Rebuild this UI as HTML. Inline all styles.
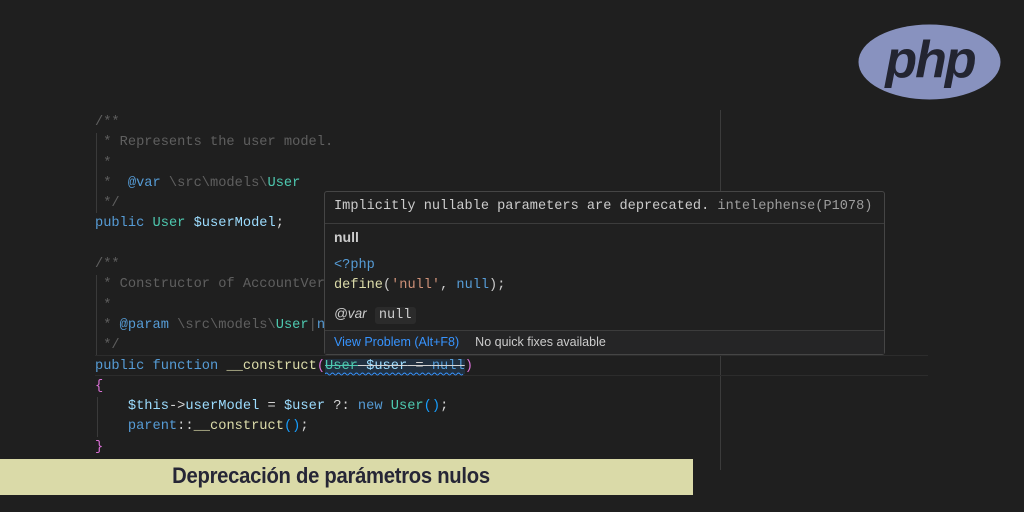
<!DOCTYPE html>
<html><head><meta charset="utf-8"><style>
body{margin:0;width:1024px;height:512px;background:#1f1f1f;overflow:hidden;position:relative;font-family:"Liberation Mono",monospace}
.code{position:absolute;left:95px;top:113px;font-size:13.7px;line-height:20.3px;white-space:pre;color:#d4d4d4}
.c{color:#5f5f5f}.k{color:#569cd6}.t{color:#4ec9b0}.v{color:#9cdcfe}.f{color:#dcdcaa}.p{color:#da70d6}.b{color:#179fff}.s{color:#ce9178}
.cur{position:absolute;left:95px;top:355px;width:833px;height:19px;border-top:1px solid #2c2c2c;border-bottom:1px solid #2c2c2c}
.vl{position:absolute;left:720px;top:110px;width:1px;height:360px;background:#3b3b3b}
.guide{position:absolute;left:96px;width:1px;background:#3a3a3a}
.pop{position:absolute;left:324px;top:191px;width:559px;height:162px;background:#202020;border:1px solid #454545;border-radius:3px;font-size:13.6px;color:#cccccc}
.pop .h{position:absolute;left:9px;top:7px;white-space:pre}
.sep{position:absolute;left:0;right:0;height:1px;background:#3c3c3c}
.sans{font-family:"Liberation Sans",sans-serif}
.banner{position:absolute;left:0;top:459px;width:693px;height:36px;background:#dadaa8}
.banner span{position:absolute;left:331px;top:0;transform:translateX(-50%) scaleX(0.92);white-space:nowrap;font-family:"Liberation Sans",sans-serif;font-weight:bold;font-size:22px;color:#262636;line-height:34px;letter-spacing:-0.3px}
</style></head><body>
<svg style="position:absolute;left:858px;top:24px" width="143" height="76" viewBox="0 0 143 76">
<ellipse cx="71.5" cy="38" rx="71" ry="37.5" fill="#8892bf"/>
<text x="72" y="53" text-anchor="middle" font-family="Liberation Sans,sans-serif" font-weight="bold" font-style="italic" font-size="52" fill="#232531" letter-spacing="-2">php</text>
</svg>
<div class="vl"></div>
<div class="guide" style="top:133px;height:80px"></div>
<div class="guide" style="top:275px;height:80px"></div>
<div class="guide" style="top:397px;height:40px;left:97px"></div>
<div class="cur"></div>
<div class="code"><span class="c">/**</span>
<span class="c"> * Represents the user model.</span>
<span class="c"> *</span>
<span class="c"> *  </span><span class="k">@var</span><span class="c"> \src\models\</span><span class="t">User</span>
<span class="c"> */</span>
<span class="k">public</span> <span class="t">User</span> <span class="v">$userModel</span>;

<span class="c">/**</span>
<span class="c"> * Constructor of AccountVer</span>
<span class="c"> *</span>
<span class="c"> * </span><span class="k">@param</span><span class="c"> \src\models\</span><span class="t">User</span><span class="c">|</span><span class="k">n</span>
<span class="c"> */</span>
<span class="k">public</span> <span class="k">function</span> <span class="f">__construct</span><span class="p">(</span><span style="background:#213040"><span class="t" style="text-decoration:line-through">User</span><span style="text-decoration:line-through"> <span class="v">$user</span> = <span class="k">null</span></span></span><span class="p">)</span>
<span class="p">{</span>
    <span class="v">$this</span>-&gt;<span class="v">userModel</span> = <span class="v">$user</span> ?: <span class="k">new</span> <span class="t">User</span><span class="b">()</span>;
    <span class="k">parent</span>::<span class="f">__construct</span><span class="b">()</span>;
<span class="p">}</span></div>
<svg style="position:absolute;left:325px;top:372px" width="140" height="4"><path d="M0 2 q1.5 -2 3 0 t3 0 t3 0 t3 0 t3 0 t3 0 t3 0 t3 0 t3 0 t3 0 t3 0 t3 0 t3 0 t3 0 t3 0 t3 0 t3 0 t3 0 t3 0 t3 0 t3 0 t3 0 t3 0 t3 0 t3 0 t3 0 t3 0 t3 0 t3 0 t3 0 t3 0 t3 0 t3 0 t3 0 t3 0 t3 0 t3 0 t3 0 t3 0 t3 0 t3 0 t3 0 t3 0 t3 0 t3 0 t3 0" stroke="#3794ff" fill="none" stroke-width="1"/></svg>
<div class="pop">
<div class="h">Implicitly nullable parameters are deprecated. <span style="color:#9d9d9d">intelephense(P1078)</span></div>
<div class="sep" style="top:31px"></div>
<div class="sans" style="position:absolute;left:9px;top:37px;font-weight:bold;font-size:14px">null</div>
<div style="position:absolute;left:9px;top:64px;line-height:20px;white-space:pre"><span class="k">&lt;?php</span>
<span class="f">define</span>(<span class="s">'null'</span>, <span class="k">null</span>);</div>
<div style="position:absolute;left:9px;top:114px"><span class="sans" style="font-style:italic">@var</span> <span style="background:#2b2b2b;padding:1px 4px;border-radius:3px">null</span></div>
<div class="sep" style="top:138px"></div>
<div class="sans" style="position:absolute;left:0;right:0;top:139px;height:23px;background:#252526;font-size:12.5px;line-height:23px;padding-left:9px"><span style="color:#3794ff">View Problem (Alt+F8)</span><span style="margin-left:16px;color:#cccccc">No quick fixes available</span></div>
</div>
<div class="banner"><span>Deprecación de parámetros nulos</span></div>
</body></html>
